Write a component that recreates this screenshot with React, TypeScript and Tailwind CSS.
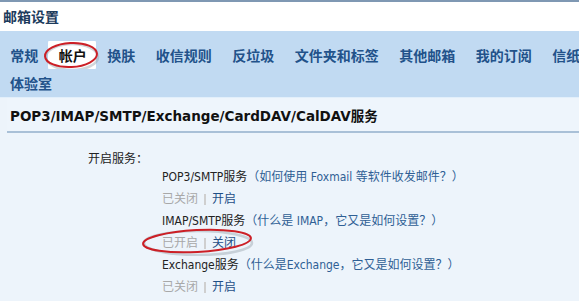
import React from 'react';

const tabs = ['常规', '帐户', '换肤', '收信规则', '反垃圾', '文件夹和标签', '其他邮箱', '我的订阅', '信纸'];

const RedRing: React.FC<{ className: string; w: number; h: number }> = ({ className, w, h }) => (
  <svg className={className} width={w} height={h} viewBox={`0 0 ${w} ${h}`} fill="none">
    <ellipse cx={w / 2 + 1} cy={h / 2 + 2} rx={w / 2 - 3} ry={h / 2 - 3} stroke="#9aa3ad" strokeOpacity={0.45} strokeWidth={2.5} />
    <ellipse
      cx={w / 2}
      cy={h / 2}
      rx={w / 2 - 3}
      ry={h / 2 - 4}
      stroke="#cc1f26"
      strokeWidth={2}
      transform={`rotate(-3 ${w / 2} ${h / 2})`}
    />
  </svg>
);

const Toggle: React.FC<{ on: boolean }> = ({ on }) => (
  <div className="flex items-center h-[22px] text-[12px]">
    <span className="text-[#a8a8a8]">{on ? '已开启' : '已关闭'}</span>
    <span className="inline-block w-[2px] h-[11px] bg-[#cfcfcf] mx-[6px]" />
    <span className="text-[#1f4f86]">{on ? '关闭' : '开启'}</span>
  </div>
);

const Service: React.FC<{ name: string; help: React.ReactNode }> = ({ name, help }) => (
  <div className="flex items-center h-[22px] text-[12px] whitespace-nowrap">
    <span className="text-[#222]">{name}</span>
    <span className="text-[#2f5f95]">{help}</span>
  </div>
);

const App: React.FC = () => {
  return (
    <div
      className="relative w-[579px] h-[301px] overflow-hidden bg-[#edf4fb] border-t-2 border-[#7f98b3]"
      style={{ fontFamily: '"DejaVu Sans Condensed", "DejaVu Sans", "Noto Sans CJK SC", sans-serif' }}
    >
      {/* title */}
      <div className="h-[29px] bg-white px-[3px] flex items-center">
        <span className="text-[14px] font-bold text-[#1c3b5c]" style={{ fontFamily: '"Noto Sans CJK SC", sans-serif' }}>
          邮箱设置
        </span>
      </div>

      {/* tabs */}
      <div className="h-[66px] bg-[#c1daf2] pt-[10px]" style={{ fontFamily: '"Noto Sans CJK SC", sans-serif' }}>
        <div className="flex h-[28px] items-center whitespace-nowrap overflow-hidden">
          {tabs.map((t) =>
            t === '帐户' ? (
              <div key={t} className="relative h-[28px] flex items-center px-[10.25px]">
                <div className="absolute left-[-1px] right-[1px] top-[-1px] bottom-[-1px] bg-white rounded-[3px]" />
                <span className="relative text-[14px] font-bold text-[#111]">{t}</span>
                <RedRing className="absolute left-[-7px] top-[-2px]" w={58} h={32} />
              </div>
            ) : (
              <div key={t} className="h-[28px] flex items-center px-[10.25px]">
                <span className="text-[14px] font-bold text-[#22528a]">{t}</span>
              </div>
            )
          )}
        </div>
        <div className="flex h-[28px] items-center px-[10px]">
          <span className="text-[14px] font-bold text-[#22528a]">体验室</span>
        </div>
      </div>

      {/* section heading */}
      <div className="h-px bg-[#e2effb]" />
      <div className="ml-[7px] h-[35px] pl-[3px] pt-[9px] bg-[#eef5fc] border-b-2 border-[#a9c0d7]">
        <div
          className="text-[13.5px] leading-[18px] font-bold text-[#111] whitespace-nowrap"
          style={{ fontFamily: '"DejaVu Sans", "Noto Sans CJK SC", sans-serif' }}
        >
          POP3/IMAP/SMTP/Exchange/CardDAV/CalDAV服务
        </div>
      </div>

      {/* content */}
      <div className="pt-[19px]">
        <div className="pl-[88px] h-[14px] leading-[14px] text-[12px] text-[#222]">开启服务：</div>
        <div className="pl-[162px]">
          <Service name="POP3/SMTP服务" help={<>（如何使用 Foxmail 等软件收发邮件？）</>} />
          <Toggle on={false} />
          <Service name="IMAP/SMTP服务" help={<>（什么是 IMAP，它又是如何设置？）</>} />
          <div className="relative">
            <Toggle on={true} />
            <RedRing className="absolute left-[-22px] top-[-6px]" w={114} h={30} />
          </div>
          <Service name="Exchange服务" help={<>（什么是Exchange，它又是如何设置？）</>} />
          <Toggle on={false} />
        </div>
      </div>
    </div>
  );
};

export default App;
